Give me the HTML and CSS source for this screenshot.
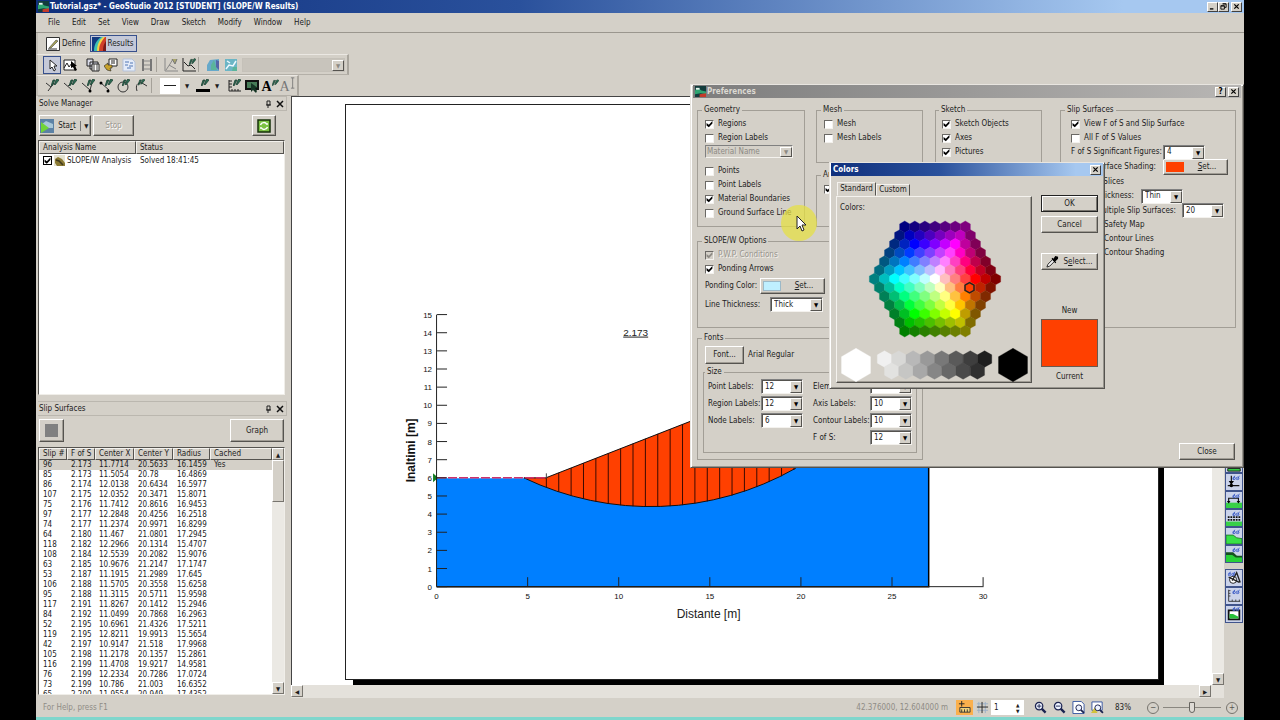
FILE: index.html
```html
<!DOCTYPE html>
<html lang="en">
<head>
<meta charset="utf-8">
<title>Tutorial.gsz* - GeoStudio 2012</title>
<link rel="stylesheet" href="styles.css">
</head>
<body>
<svg class="defs" aria-hidden="true">
  <symbol id="pen" viewBox="0 0 8 8"><path d="M0 7 2 1 4 1 1 7M3 6 5 1 6 0 8 1 4 6" fill="#2b6b52" stroke="#17382c" stroke-width=".7"/></symbol>
  <symbol id="app" viewBox="0 0 12 12"><path d="M0 0h12v12H0z" fill="#123c3c"/><path d="M0 5 3 2l4 3 5 1v3L6 8 0 9z" fill="#2fa572"/><path d="M1 2h4v2H1z" fill="#e8f4f0"/><path d="M5 9l7-1v4H5z" fill="#c33a2b"/></symbol>
  <symbol id="glasses" viewBox="0 0 10 6"><path d="M1 5 3 1M6 5 8 1" stroke="#4060c8" fill="none"/><circle cx="2" cy="4" r="1.5" fill="none" stroke="#4060c8"/><circle cx="6" cy="4" r="1.5" fill="none" stroke="#4060c8"/></symbol>
  <symbol id="lens" viewBox="0 0 14 14"><path d="M8 8l4.500 4.500" stroke="#1c2350" stroke-width="2.500"/><circle cx="5.500" cy="5.500" r="4" fill="#eef3ff" stroke="#1c2350" stroke-width="1.300"/></symbol>
</svg>
<div class="app">
  <header class="titlebar">
    <svg class="title-icon" viewBox="0 0 12 12"><use href="#app"/></svg>
    <h1 class="title-text">Tutorial.gsz* - GeoStudio 2012 [STUDENT] (SLOPE/W Results)</h1>
    <button class="win-btn" aria-label="Minimize"><svg viewBox="0 0 8 8"><path d="M1 6h4v1.500H1z"/></svg></button>
    <button class="win-btn" aria-label="Restore"><svg viewBox="0 0 8 8"><path d="M3 1h4v4H5M1 3h4v4H1z" fill="none" stroke="#000"/><path d="M1 3h4v1H1zM3 .5h4v1H3z"/></svg></button>
    <button class="win-btn win-close" aria-label="Close"><svg viewBox="0 0 8 8"><path d="M1.500 1.500l5 5M6.500 1.500l-5 5" stroke="#000" stroke-width="1.400"/></svg></button>
  </header>
  <nav class="menubar">
    <button>File</button><button>Edit</button><button>Set</button><button>View</button><button>Draw</button><button>Sketch</button><button>Modify</button><button>Window</button><button>Help</button>
  </nav>
  <div class="toolbar">
    <button class="mode"><svg viewBox="0 0 14 14"><path d="M.5.5h13v13H.5z" fill="#fff" stroke="#333"/><path d="M3 11 10 3l2 1-7 7z" fill="#a9a558" stroke="#444" stroke-width=".6"/><path d="M2 12h9" stroke="#333"/></svg>Define</button>
    <button class="mode active"><svg viewBox="0 0 14 14"><path d="M0 0h14v14H0z" fill="#123a80"/><path d="M2 14C2 7 5 3 9 0h5v14z" fill="#3ec0b5"/><path d="M5 14C5 8 7 3 11 0h3v14z" fill="#f0d34a"/><path d="M7 14c0-6 2-9 6-14h1v14z" fill="#d0402a"/><path d="M11 14c0-5 1-7 3-10v10z" fill="#7a1a1a"/></svg>Results</button>
  </div>
  <div class="toolbar toolbar-fit">
    <button class="tool active" aria-label="Select"><svg viewBox="0 0 14 14"><path d="M5 2v9l2-2 2 4 1.500-1L9 8h3z" fill="#fff" stroke="#222"/></svg></button>
    <button class="tool" aria-label="Pick region"><svg viewBox="0 0 14 14"><path d="M1 2h11v10H1z" fill="#fff" stroke="#222"/><path d="M1 10l3-5 2 4 3-4 3 6" fill="none" stroke="#222"/><path d="M8 3v7l2-1 2 4 2-1-2-4h2z"/></svg></button>
    <i class="gap"></i>
    <button class="tool" aria-label="Copy"><svg viewBox="0 0 14 14"><path d="M1 1h6v7H1zM4 4h8v7H4z" fill="#d9dbe8" stroke="#222"/><path d="M6 6h7v7H6z" fill="#fff" stroke="#222"/><path d="M8 6v7M11 6v7" stroke="#444"/></svg></button>
    <button class="tool" aria-label="View results"><svg viewBox="0 0 14 14"><path d="M5 1h8v7H5z" fill="#fff" stroke="#222"/><path d="M7 3h4M7 5h4" stroke="#222"/><path d="M0 8l4-3v2h4v3H6l1 3-4-1z" fill="#c9a32c" stroke="#222" stroke-width=".6"/></svg></button>
    <button class="tool" aria-label="Report"><svg viewBox="0 0 14 14"><path d="M1 1h9l3 3v9H1z" fill="#e4ebf8" stroke="#b5c2da"/><path d="M3 4h4M3 7h3M7 8h4M5 10h4M8 5h3" stroke="#5076b5"/></svg></button>
    <button class="tool" aria-label="Animation"><svg viewBox="0 0 14 14"><path d="M3 1v12M11 1v12" stroke="#777" stroke-width="2"/><path d="M4 3h6M4 7h6M4 11h6" stroke="#888"/></svg></button>
    <i class="sep"></i>
    <button class="tool" aria-label="Graph"><svg viewBox="0 0 14 14"><path d="M1 0v13h13M2 12l4-6 3-5M5 7l7 4" fill="none" stroke="#888"/><path d="M8 1l3 5 2-5" fill="#a9a56c" stroke="#777"/></svg></button>
    <button class="tool" aria-label="Slice graph"><svg viewBox="0 0 14 14"><path d="M1 0v13h13M2 4l4 4 3-1 4 4" fill="none" stroke="#222"/><use href="#pen" x="7" width="7" height="8"/></svg></button>
    <i class="sep"></i>
    <button class="tool" aria-label="Contours"><svg viewBox="0 0 14 14"><path d="M1 7l3-5 9-1v12H1z" fill="#67a9ca"/><path d="M5 12V7l3-5 3 10z" fill="#5bb49b"/><path d="M10 2l3 1v9l-3-3z" fill="#5366a8"/></svg></button>
    <button class="tool" aria-label="Contour labels"><svg viewBox="0 0 14 14"><path d="M1 1h12v12H1z" fill="#6bb5c5"/><path d="M2 11l3-4 4 1 3-5M3 3l3 2" fill="none" stroke="#eef8ff" stroke-width="1.500"/><path d="M9 9h4v4H8z" fill="#5bb49b"/></svg></button>
    <span class="combo combo-wide disabled"><select aria-label="Contour parameter" disabled><option></option></select></span>
  </div>
  <div class="toolbar toolbar-fit toolbar-sketch">
    <button class="tool" aria-label="Line"><svg viewBox="0 0 14 14"><path d="M1 4l5 4M6 8l3-4M6 8l-3 4" stroke="#333" fill="none"/><use href="#pen" x="6" width="8" height="8"/></svg></button>
    <button class="tool" aria-label="Polyline"><svg viewBox="0 0 14 14"><path d="M1 4l8 7M5 7l4-3" stroke="#333" fill="none"/><use href="#pen" x="6" width="8" height="8"/></svg></button>
    <button class="tool" aria-label="Spline"><svg viewBox="0 0 14 14"><path d="M1 4l8 7 2-7" stroke="#333" fill="none"/><circle cx="9" cy="12" r="1.500"/><use href="#pen" x="6" width="8" height="8"/></svg></button>
    <button class="tool" aria-label="Points"><svg viewBox="0 0 14 14"><path d="M2 4l8 7" stroke="#333"/><circle cx="2" cy="4" r="1.500"/><circle cx="9" cy="12" r="1.500"/><use href="#pen" x="6" width="8" height="8"/></svg></button>
    <button class="tool" aria-label="Circle"><svg viewBox="0 0 14 14"><circle cx="6" cy="8" r="5" fill="none" stroke="#333"/><use href="#pen" x="5" width="8" height="8"/></svg></button>
    <button class="tool" aria-label="Arc"><svg viewBox="0 0 14 14"><path d="M2 12C0 6 3 3 7 4l5 3" fill="none" stroke="#333"/><use href="#pen" x="3" width="7" height="7"/></svg></button>
    <i class="sep"></i>
    <button class="line-style" aria-label="Line style"></button><span class="drop">▼</span>
    <button class="tool" aria-label="Pen color"><svg viewBox="0 0 14 14"><path d="M0 10h14v3H0z"/><use href="#pen" x="5" width="8" height="8"/></svg></button><span class="drop drop-slim">▼</span>
    <i class="gap gap-slim"></i>
    <button class="tool" aria-label="Axes"><svg viewBox="0 0 14 14"><path d="M2 1v11h12M2 2h3M2 5h3M2 8h3M5 12v-2M8 12v-2M11 12v-2" fill="none" stroke="#222"/><use href="#pen" x="6" width="8" height="8"/></svg></button>
    <button class="tool" aria-label="Picture"><svg viewBox="0 0 14 14"><path d="M1 2h12v8H1z" fill="#477b57" stroke="#111" stroke-width="2"/><path d="M6 4v9l2-2 3 3 1-2-2-3h3z" fill="#153524"/></svg></button>
    <button class="tool letter" aria-label="Text"><b>A</b><svg viewBox="0 0 8 8"><use href="#pen"/></svg></button>
    <button class="tool letter dim" aria-label="Edit text">A<svg viewBox="0 0 8 14"><path d="M1 1h4M3 1v12M1 13h4" stroke="#777" fill="none"/></svg></button>
  </div>

  <main class="workspace">
    <aside class="docks">
      <section class="dock">
        <header class="dock-head"><h2>Solve Manager</h2><svg viewBox="0 0 8 8"><path d="M3 1h3v4H3zM2 5h5M4 5v3" fill="none" stroke="#222"/></svg><svg viewBox="0 0 8 8"><path d="M1 1l6 6M7 1l-6 6" stroke="#111" stroke-width="1.500"/></svg></header>
        <div class="dock-tools">
          <button class="btn start"><svg viewBox="0 0 14 14"><path d="M0 0h14v14H0z" fill="#5c82a5"/><path d="M2 5l4-3 7 3v4H2z" fill="#a8c7d8"/><path d="M1 3l8 6-8 5z" fill="#70d436"/></svg><span>Sta<u>r</u>t</span><span class="drop start-drop">▼</span></button>
          <button class="btn stop" disabled>Stop</button>
          <button class="btn refresh" aria-label="Refresh"><svg viewBox="0 0 14 14"><path d="M1 1h12v12H1z" fill="#7bc143" stroke="#16300a" stroke-width="1.500"/><path d="M3.500 6c1-3 5-3 6-1h1.500M10.500 8c-1 3-5 3-6 1H3" fill="none" stroke="#fff" stroke-width="1.500"/></svg></button>
        </div>
        <div class="list solve-list">
          <table>
            <colgroup><col class="c-name"><col></colgroup>
            <thead><tr><th>Analysis Name</th><th>Status</th></tr></thead>
            <tbody><tr><td><label class="check tree"><input type="checkbox" checked><svg viewBox="0 0 11 11"><path d="M0 0h11v11H0z" fill="#e4e1cf"/><path d="M1 4l3-2 4 2 3 4v3H3L1 8z" fill="#8c7b35"/><path d="M2 5l3 1 4 4" stroke="#413b1d" stroke-width="1.500" fill="none"/></svg>SLOPE/W Analysis</label></td><td>Solved 18:41:45</td></tr></tbody>
          </table>
        </div>
      </section>
      <section class="dock dock-grow">
        <header class="dock-head"><h2>Slip Surfaces</h2><svg viewBox="0 0 8 8"><path d="M3 1h3v4H3zM2 5h5M4 5v3" fill="none" stroke="#222"/></svg><svg viewBox="0 0 8 8"><path d="M1 1l6 6M7 1l-6 6" stroke="#111" stroke-width="1.500"/></svg></header>
        <div class="dock-tools slip-tools">
          <button class="btn square" aria-label="Stop at slip surface"><i></i></button>
          <button class="btn graph">Graph</button>
        </div>
        <div class="list slip-list">
          <div class="clip">
            <table>
              <colgroup><col class="c-slip"><col class="c-slip"><col class="c-center"><col class="c-center"><col class="c-radius"><col></colgroup>
              <thead><tr><th>Slip #</th><th>F of S</th><th>Center X</th><th>Center Y</th><th>Radius</th><th>Cached</th></tr></thead>
              <tbody id="slips"></tbody>
            </table>
          </div>
          <div class="vscroll"><button class="sb" aria-label="Up">▲</button><i class="thumb"></i><button class="sb sb-end" aria-label="Down">▼</button></div>
        </div>
      </section>
    </aside>

    <section class="view">
      <div class="view-row">
        <div class="canvas">
          <div class="sheet">
            <svg id="plot" class="plot" viewBox="345 104 813 575" role="img" aria-label="Slope stability section">
              <path d="M435 478H545L830 366 928 366V586H435z" fill="#007fff"/>
              <path d="M523 477.500H545L830 366V440L795 468A294 294 0 0 1 523 477.500z" fill="#ff4000" stroke="#111"/>
              <g id="slices" stroke="#3a0a00" stroke-width="1"></g>
              <path d="M928.500 366V586.500H435.500" fill="none" stroke="#000" stroke-width="1.500"/>
              <path d="M436 477.500H545" stroke="#d0306a" stroke-width="1.500" stroke-dasharray="9 2"/>
              <path d="M545.500 478v-5" stroke="#444"/>
              <path d="M432 473l5 4.500-5 4.500z" fill="#117a1c"/>
              <g id="axes" stroke="#222" stroke-width="1"><path d="M435.500 314V586.500H983.500" fill="none"/></g>
              <g id="ticks" class="tick-text"></g>
              <text class="fs" x="635" y="335" text-anchor="middle">2.173</text>
              <text class="axis-x" x="708" y="618" text-anchor="middle">Distante [m]</text>
              <text class="axis-y" text-anchor="middle" transform="translate(414 450) rotate(-90)">Inaltimi [m]</text>
            </svg>
          </div>
        </div>
        <div class="vscroll view-v"><button class="sb sb-end" aria-label="Scroll down">▼</button></div>
      </div>
      <div class="hscroll"><button class="sb" aria-label="Scroll left">◀</button><button class="sb sb-right" aria-label="Scroll right">▶</button></div>
    </section>

    <div class="side-tools">
      <button aria-label="Regions"><svg viewBox="0 0 18 18"><path d="M2 14h14v3H2z" fill="#38d048" stroke="#111"/></svg></button>
      <button aria-label="Point loads"><svg viewBox="0 0 18 18"><path d="M6 2v9M2 13h13" stroke="#111" stroke-width="1.300"/><path d="M3 8h6l-3 4z"/><circle cx="6" cy="13" r="2"/><use href="#glasses" x="7" y="1" width="10" height="6"/></svg></button>
      <button aria-label="Surcharge"><svg viewBox="0 0 18 18"><path d="M0 12h18v6H0z" fill="#38d048"/><path d="M3 12V7h11v5" fill="none" stroke="#111" stroke-width="1.300"/><path d="M1 10h4l-2 3zM12 10h4l-2 3z"/><use href="#glasses" x="7" y="1" width="10" height="6"/></svg></button>
      <button aria-label="Reinforcement"><svg viewBox="0 0 18 18"><path d="M0 13h18v5H0z" fill="#38d048"/><path d="M2 8h14M2 11h14" stroke="#111" stroke-width="2" stroke-dasharray="2 1"/><use href="#glasses" x="7" y="1" width="10" height="6"/></svg></button>
      <button aria-label="Pore water"><svg viewBox="0 0 18 18"><path d="M0 8h8l4 3 6 1v6H0z" fill="#38e048" stroke="#227a2a"/><use href="#glasses" x="7" y="1" width="10" height="6"/></svg></button>
      <button aria-label="Ponding"><svg viewBox="0 0 18 18"><path d="M0 8h8l4 3 6 1v6H0z" fill="#28d038"/><path d="M0 7h8l4 4h6v2h-7L7 10H0z" fill="#175020"/><use href="#glasses" x="7" y="1" width="10" height="6"/></svg></button>
      <i></i>
      <button aria-label="Sketch view"><svg viewBox="0 0 18 18"><circle cx="8" cy="11" r="4" fill="#fff" stroke="#111"/><path d="M7 12l5-9 4 11M3 8l12 6" fill="none" stroke="#222" stroke-width="1.500"/><use href="#glasses" x="2" y="1" width="10" height="6"/></svg></button>
      <button aria-label="Axes view"><svg viewBox="0 0 18 18"><path d="M3 2v13h13M3 3h2M3 6h2M3 9h2M7 15v-2M11 15v-2M15 15v-2" fill="none" stroke="#333"/><use href="#glasses" x="7" y="1" width="10" height="6"/></svg></button>
      <button aria-label="Picture view"><svg viewBox="0 0 18 18"><path d="M3 5h12v10H3z" fill="#fff" stroke="#111" stroke-width="2"/><path d="M4 9h4l6 3v2H4z" fill="#28c038"/><use href="#glasses" x="7" y="0" width="10" height="6"/></svg></button>
    </div>
  </main>

  <footer class="status">
    <span class="help">For Help, press F1</span>
    <span class="coords">42.376000, 12.604000 m</span>
    <button class="st-btn hot" aria-label="Snap"><svg viewBox="0 0 14 14"><path d="M1 3h6M4 0v6" stroke="#222"/><path d="M2 7h11v5H2z" fill="#f3d27a" stroke="#333"/><path d="M4 12V9M7 12V9M10 12V9" stroke="#333"/></svg></button>
    <button class="st-btn grid-btn" aria-label="Grid"><svg viewBox="0 0 14 14"><path d="M1 3h12M1 10h12M3 1v12M10 1v12" stroke="#9bb0c8"/><path d="M1 6.500h12M6.500 1v12" stroke="#222"/></svg></button>
    <span class="spin"><input aria-label="Grid spacing" value="1"><b>▲<br>▼</b></span>
    <button class="st-btn" aria-label="Zoom in"><svg viewBox="0 0 14 14"><use href="#lens"/><path d="M3 5.500h5M5.500 3v5" stroke="#1c2350"/></svg></button>
    <button class="st-btn" aria-label="Zoom out"><svg viewBox="0 0 14 14"><use href="#lens"/><path d="M3 5.500h5" stroke="#1c2350"/></svg></button>
    <button class="st-btn" aria-label="Zoom page"><svg viewBox="0 0 14 14"><path d="M1 .5h9l3 3v10H1z" fill="#fff" stroke="#3353a0"/><use href="#lens" x="3" y="3" width="11" height="11"/></svg></button>
    <button class="st-btn" aria-label="Zoom objects"><svg viewBox="0 0 14 14"><path d="M1 1h11v9H1z" fill="#fff" stroke="#3353a0"/><path d="M0 13l4-6 3 6z" fill="#d2c23a"/><use href="#lens" x="3" y="3" width="11" height="11"/></svg></button>
    <span class="pct">83%</span>
    <button class="round" aria-label="Decrease zoom">−</button>
    <input class="slider" type="range" aria-label="Zoom" value="50">
    <button class="round" aria-label="Increase zoom">+</button>
  </footer>

  <section class="window prefs" role="dialog" aria-label="Preferences">
    <header class="titlebar inactive">
      <svg class="title-icon" viewBox="0 0 12 12"><use href="#app"/></svg>
      <h2 class="title-text">Preferences</h2>
      <button class="win-btn" aria-label="Help">?</button>
      <button class="win-btn win-close" aria-label="Close"><svg viewBox="0 0 8 8"><path d="M1.500 1.500l5 5M6.500 1.500l-5 5" stroke="#000" stroke-width="1.400"/></svg></button>
    </header>
    <div class="prefs-body">
      <div class="prefs-left">
        <div class="pair">
          <fieldset class="geometry"><legend>Geometry</legend>
            <label class="check"><input type="checkbox" checked>Regions</label>
            <label class="check"><input type="checkbox">Region Labels</label>
            <span class="combo material disabled"><select aria-label="Region label" disabled><option>Material Name</option></select></span>
            <label class="check"><input type="checkbox">Points</label>
            <label class="check"><input type="checkbox">Point Labels</label>
            <label class="check"><input type="checkbox" checked>Material Boundaries</label>
            <label class="check"><input type="checkbox">Ground Surface Line</label>
          </fieldset>
          <div class="stack">
            <fieldset class="mesh"><legend>Mesh</legend>
              <label class="check"><input type="checkbox">Mesh</label>
              <label class="check"><input type="checkbox">Mesh Labels</label>
            </fieldset>
            <fieldset class="grow"><legend>Arrows</legend>
              <label class="check"><input type="checkbox" aria-label="Arrows" checked></label>
            </fieldset>
          </div>
        </div>
        <fieldset class="options"><legend>SLOPE/W Options</legend>
          <label class="check disabled"><input type="checkbox" checked disabled>P.W.P. Conditions</label>
          <label class="check"><input type="checkbox" checked>Ponding Arrows</label>
          <div class="field"><span class="w-color">Ponding Color:</span><button class="btn set"><i class="chip sky"></i><span><u>S</u>et...</span></button></div>
          <div class="field"><label class="w-thick" for="thick">Line Thickness:</label><span class="combo c-thick"><select id="thick"><option>Thick</option></select></span></div>
        </fieldset>
        <fieldset class="fonts"><legend>Fonts</legend>
          <div class="font-row"><button class="btn font-btn">Font...</button><span>Arial Regular</span></div>
          <fieldset class="sizes"><legend>Size</legend>
            <label for="s1">Point Labels:</label><span class="combo"><select id="s1"><option>12</option></select></span>
            <label for="s2" class="second">Element Labels:</label><span class="combo"><select id="s2"><option>6</option></select></span>
            <label for="s3">Region Labels:</label><span class="combo"><select id="s3"><option>12</option></select></span>
            <label for="s4" class="second">Axis Labels:</label><span class="combo"><select id="s4"><option>10</option></select></span>
            <label for="s5">Node Labels:</label><span class="combo"><select id="s5"><option>6</option></select></span>
            <label for="s6" class="second">Contour Labels:</label><span class="combo"><select id="s6"><option>10</option></select></span>
            <label for="s7" class="second col3">F of S:</label><span class="combo"><select id="s7"><option>12</option></select></span>
          </fieldset>
        </fieldset>
      </div>
      <fieldset class="sketch"><legend>Sketch</legend>
        <label class="check"><input type="checkbox" checked>Sketch Objects</label>
        <label class="check"><input type="checkbox" checked>Axes</label>
        <label class="check"><input type="checkbox" checked>Pictures</label>
      </fieldset>
      <div class="prefs-right">
        <fieldset class="slip"><legend>Slip Surfaces</legend>
          <label class="check"><input type="checkbox" checked>View F of S and Slip Surface</label>
          <label class="check"><input type="checkbox">All F of S Values</label>
          <div class="field"><label class="e-wide" for="figs">F of S Significant Figures:</label><span class="combo"><select id="figs"><option>4</option></select></span></div>
          <div class="field field-tall"><span class="e-wide e-right">Slip Surface Shading:</span><button class="btn set"><i class="chip flame"></i><span><u>S</u>et...</span></button></div>
          <label class="check"><input type="checkbox" checked>View Slices</label>
          <div class="field"><label class="e-thin" for="thin">Line Thickness:</label><span class="combo"><select id="thin"><option>Thin</option></select></span></div>
          <div class="field field-mid"><label class="e-max" for="multi"># Multiple Slip Surfaces:</label><span class="combo"><select id="multi"><option>20</option></select></span></div>
          <label class="check sub"><input type="checkbox">Safety Map</label>
          <label class="check sub"><input type="checkbox">Contour Lines</label>
          <label class="check sub"><input type="checkbox">Contour Shading</label>
        </fieldset>
        <button class="btn close-btn">Close</button>
      </div>
    </div>
  </section>

  <svg class="pointer" viewBox="0 0 40 40"><circle cx="20" cy="20" r="18" fill="#e6e040" opacity=".72"/><path d="M18 13v13l3-3 2 5 2-1-2-5h4z" fill="#fff" stroke="#222"/></svg>

  <section class="window colors" role="dialog" aria-label="Colors">
    <header class="titlebar">
      <h2 class="title-text">Colors</h2>
      <button class="win-btn win-close" aria-label="Close"><svg viewBox="0 0 8 8"><path d="M1.500 1.500l5 5M6.500 1.500l-5 5" stroke="#000" stroke-width="1.400"/></svg></button>
    </header>
    <div class="colors-body">
      <div class="tabs">
        <div class="tab-row"><button class="tab on">Standard</button><button class="tab">Custom</button></div>
        <div class="tab-page">
          <span>Colors:</span>
          <svg id="comb" class="comb" viewBox="839 214 188 168"></svg>
        </div>
      </div>
      <div class="actions">
        <button class="btn ok">OK</button>
        <button class="btn">Cancel</button>
        <button class="btn select"><svg viewBox="0 0 14 14"><path d="M1 13l1-3 5-5 2 2-5 5z" fill="#eee" stroke="#222"/><path d="M6 4l1-1 1 1 2-3 3 1v2l-3 3 1 1-1 1z"/></svg><span>S<u>e</u>lect...</span></button>
        <span class="new">New</span>
        <i class="swatch"></i>
        <span>Current</span>
      </div>
    </div>
  </section>
</div>
<script src="app.js"></script>
</body>
</html>
```

FILE: styles.css
```css
* { box-sizing: border-box; }
body {
  margin: 0;
  background: #000;
  color: #1c1c1c;
  font: 8px/10px "DejaVu Sans Condensed", "DejaVu Sans", sans-serif;
}
button, select, input { font: inherit; color: inherit; margin: 0; padding: 0; border: 0; border-radius: 0; }
button { background: none; white-space: nowrap; }
h1, h2 { margin: 0; font-size: inherit; }
label, span { white-space: nowrap; }
.defs { position: absolute; width: 0; height: 0; }

.app {
  position: relative;
  display: flex;
  flex-direction: column;
  height: 100vh;
  margin: 0 36px;
  background: #d4d0c8;
  border-bottom: 3px solid #7fd6cc;
  overflow: hidden;
}

/* title bars */
.titlebar {
  flex: none;
  display: flex;
  align-items: center;
  height: 13px;
  padding: 0 2px;
  background: linear-gradient(90deg, #0f2f7c, #2a519c 40%, #a6c8f0 90%);
  color: #fff;
}
.titlebar.inactive { background: linear-gradient(90deg, #7d7d7d, #b8b6b4); color: #dcd9d2; }
.title-icon { width: 11px; height: 11px; margin-right: 1px; }
.title-text { flex: 1; font-weight: bold; line-height: 12px; }
.win-btn {
  display: flex;
  align-items: center;
  justify-content: center;
  width: 11px;
  height: 10px;
  background: #d4d0c8;
  border: 1px solid;
  border-color: #fff #404040 #404040 #fff;
  color: #000;
  font-weight: bold;
}
.win-btn svg { width: 7px; height: 7px; }
.win-close { margin-left: 2px; }

/* menus and toolbars */
.menubar {
  flex: none;
  display: flex;
  gap: 12px;
  align-items: center;
  height: 20px;
  padding: 1px 12px 0;
  border-bottom: 1px solid #9a968e;
}
.toolbar {
  flex: none;
  display: flex;
  align-items: center;
  height: 21px;
  padding-left: 7px;
  border-left: 2px solid #c2beb6;
}
.toolbar-fit {
  align-self: flex-start;
  padding-left: 5px;
  padding-right: 2px;
  border-right: 2px solid #aaa69e;
  border-bottom: 1px solid #b4b0a8;
  border-top: 1px solid #ebe8e3;
}
.toolbar-sketch { padding-right: 0; }
.mode { display: flex; align-items: center; gap: 2px; height: 17px; padding: 0 1px; }
.mode svg { width: 14px; height: 14px; }
.mode.active { margin-left: 3px; padding: 0 3px 0 1px; background: #c5c9d8; border: 1px solid #37508c; }
.tool { display: flex; align-items: center; justify-content: center; width: 18px; height: 18px; }
.tool svg { width: 14px; height: 14px; }
.tool.active { background: #c5c9d8; border: 1px solid #37508c; }
.letter { align-items: flex-end; font: 14px/16px "Liberation Serif", serif; color: #000; }
.letter svg { width: 7px; height: 12px; align-self: flex-start; }
.dim { color: #777; }
.gap { width: 5px; }
.gap-slim { width: 3px; }
.sep { width: 6px; height: 15px; border-left: 1px solid #a5a199; }
.line-style { width: 20px; height: 16px; background: #fff; margin-left: 3px; }
.line-style::before { content: ""; display: block; height: 1px; margin: 0 4px; background: #222; }
.drop { width: 14px; text-align: center; font-size: 6px; }
.drop-slim { width: 10px; }

/* drop-down lists */
.combo { position: relative; display: block; width: 42px; height: 15px; }
.combo select {
  display: block;
  width: 100%;
  height: 100%;
  padding-left: 3px;
  appearance: none;
  background: #fff;
  border: 1px solid;
  border-color: #808080 #f4f2ee #f4f2ee #808080;
  box-shadow: inset 1px 1px #55534f;
  opacity: 1;
}
.combo::after {
  content: "▼";
  position: absolute;
  top: 2px;
  right: 1px;
  bottom: 1px;
  width: 10px;
  background: #d4d0c8;
  border: 1px solid;
  border-color: #fff #55534f #55534f #fff;
  font-size: 6px;
  line-height: 10px;
  text-align: center;
  color: #000;
  pointer-events: none;
}
.combo.disabled select { background: #d4d0c8; color: #8d8a84; box-shadow: none; }
.combo.disabled::after { color: #8d8a84; }
.combo-wide { width: 103px; height: 14px; margin-left: 2px; }
.combo.combo-wide select { border-color: #c5c1b9; background: #c8c4bc; }

/* push buttons and check boxes */
.btn {
  display: flex;
  align-items: center;
  justify-content: center;
  background: #d4d0c8;
  border: 1px solid;
  border-color: #fff #55534f #55534f #fff;
  box-shadow: inset -1px -1px #a09c94;
}
.check { display: flex; align-items: center; height: 14px; gap: 4px; }
.check input {
  appearance: none;
  width: 9px;
  height: 9px;
  background: #fff;
  border: 1px solid;
  border-color: #6a6864 #f4f2ee #f4f2ee #6a6864;
}
.check input:checked::before {
  content: "";
  display: block;
  width: 7px;
  height: 7px;
  background: #000;
  clip-path: polygon(8% 35%, 40% 62%, 92% 8%, 92% 42%, 40% 98%, 8% 70%);
}
.check.disabled { color: #98958e; text-shadow: 1px 1px #f4f2ee; }
.check input:disabled { background: #d4d0c8; }
.check input:disabled::before { background: #8d8a84; }

/* work area */
.workspace { flex: 1; display: flex; min-height: 0; }
.docks { flex: none; display: flex; flex-direction: column; width: 251px; padding-left: 2px; }
.dock { display: flex; flex-direction: column; }
.dock-grow { flex: 1; min-height: 0; margin-top: 6px; }
.dock-head {
  display: flex;
  align-items: center;
  gap: 4px;
  height: 15px;
  padding: 0 2px 0 1px;
  border: 1px solid #bbb7af;
  border-left: 0;
}
.dock-head h2 { flex: 1; font-weight: normal; }
.dock-head svg { width: 8px; height: 8px; }
.dock-tools { display: flex; gap: 2px; height: 29px; padding: 4px 8px 4px 1px; }
.start { width: 52px; gap: 4px; }
.start svg { width: 14px; height: 14px; }
.start-drop { width: 10px; padding-left: 2px; border-left: 1px solid #777; }
.stop { width: 41px; color: #9d9a93; text-shadow: 1px 1px #fff; }
.refresh { width: 24px; margin: 0 3px 0 auto; }
.refresh svg { width: 14px; height: 14px; }
.slip-tools { height: 31px; padding: 3px 3px 5px 1px; }
.square { width: 25px; }
.square i { width: 13px; height: 13px; background: #808080; }
.graph { width: 54px; margin-left: auto; }
.list { width: 247px; background: #fff; border: 1px solid; border-color: #55534f #f0eee9 #f0eee9 #55534f; }
.solve-list { height: 255px; }
.slip-list { flex: 1; display: flex; min-height: 0; margin-bottom: 3px; }
.clip { flex: 1; min-height: 0; overflow: hidden; }
table { width: 100%; table-layout: fixed; border-collapse: separate; border-spacing: 0; }
th, td { padding: 0 0 0 4px; text-align: left; font-weight: normal; white-space: nowrap; }
th {
  height: 12px;
  padding-left: 3px;
  background: #d4d0c8;
  border: 1px solid;
  border-color: #f4f2ee #55534f #55534f #f4f2ee;
}
.solve-list th { height: 13px; }
.c-name { width: 97px; }
.c-slip { width: 28px; }
.c-center { width: 39px; }
.c-radius { width: 37px; }
.picked td { background: #d4d0c8; }
.tree { gap: 2px; height: 13px; }
.tree svg { width: 11px; height: 11px; }
.tree input { border-color: #000; }

/* scroll bars */
.vscroll { flex: none; display: flex; flex-direction: column; width: 12px; background: #ebe9e4; }
.hscroll { flex: none; display: flex; height: 13px; padding-right: 13px; background: #e4e1db; }
.sb {
  width: 12px;
  height: 12px;
  background: #d4d0c8;
  border: 1px solid;
  border-color: #fff #77746e #77746e #fff;
  font-size: 6px;
  line-height: 9px;
  text-align: center;
}
.sb-end { margin-top: auto; }
.sb-right { margin-left: auto; }
.thumb { height: 42px; background: #d4d0c8; border: 1px solid; border-color: #fff #77746e #77746e #fff; }

/* drawing sheet */
.view { flex: 1; display: flex; flex-direction: column; min-width: 0; margin-left: 4px; }
.view-row { flex: 1; display: flex; min-height: 0; }
.canvas { flex: 1; padding: 7px 53px 5px; background: #fff; border: solid #444; border-width: 1px 0 0 1px; overflow: hidden; }
.sheet { height: 100%; background: #fff; border: 1px solid #222; box-shadow: 5px 5px #000; position: relative; }
.sheet::before { content: ""; position: absolute; left: -1px; bottom: -6px; width: 8px; height: 5px; background: #fff; }
.plot { display: block; width: 100%; height: 100%; }
.tick-text { font: 8px "Liberation Sans", sans-serif; fill: #111; stroke: none; }
.fs { font: 10px "Liberation Sans", sans-serif; text-decoration: underline; fill: #222; }
.axis-x { font: 12px "Liberation Sans", sans-serif; fill: #222; }
.axis-y { font: bold 12px "Liberation Sans", sans-serif; fill: #111; }
.side-tools { flex: none; display: flex; flex-direction: column; width: 20px; padding: 359px 1px 0; }
.side-tools button { height: 18px; background: #cbd3ea; border: 1px solid #40548c; }
.side-tools svg { display: block; width: 16px; height: 16px; }
.side-tools i { height: 6px; }

/* status bar */
.status { flex: none; display: flex; align-items: center; height: 19px; padding: 0 6px 0 7px; color: #8f8c86; }
.help { flex: 1; }
.coords { margin-right: 8px; }
.st-btn { width: 19px; height: 15px; }
.st-btn svg { display: block; width: 13px; height: 13px; margin: 0 auto; }
.hot { width: 17px; background: #fbb04c; }
.grid-btn { width: 18px; }
.spin { display: flex; align-items: center; width: 33px; height: 15px; margin-right: 7px; background: #fff; color: #222; }
.spin input { width: 25px; padding-left: 3px; background: none; }
.spin b { font-size: 5px; line-height: 6px; }
.pct { width: 40px; padding-left: 8px; color: #222; }
.round { width: 12px; height: 12px; border: 1px solid #77746e; border-radius: 50%; line-height: 9px; color: #55534f; }
.slider { appearance: none; width: 58px; height: 12px; margin: 0 5px 0 4px; background: linear-gradient(#8a8780, #8a8780) center / 100% 1px no-repeat; }
.slider::-webkit-slider-thumb { appearance: none; width: 6px; height: 11px; background: #dedbd5; border: 1px solid #66645f; border-radius: 0 0 3px 3px; }

/* floating windows */
.window {
  position: absolute;
  background: #d4d0c8;
  border: 1px solid;
  border-color: #e8e5e0 #55534f #55534f #e8e5e0;
  box-shadow: inset 1px 1px #fff, inset -1px -1px #98958e;
}
fieldset {
  min-width: 0;
  margin: 0;
  padding: 2px 6px 5px 7px;
  border: 1px solid #a29e96;
}
legend { height: 10px; margin-left: -3px; padding: 0 2px; }
.prefs { top: 84px; right: 0; width: 554px; height: 384px; padding: 0 2px; }
.prefs-body { display: flex; padding: 7px 4px 0; }
.prefs-left { width: 226px; display: flex; flex-direction: column; }
.pair { display: flex; gap: 11px; height: 122px; }
.geometry { width: 108px; }
.stack { flex: 1; display: flex; flex-direction: column; }
.mesh { height: 58px; margin-bottom: 7px; }
.grow { flex: 1; }
.material { width: 88px; height: 13px; margin-bottom: 6px; }
.material select { padding-left: 1px; }
.material::after { line-height: 8px; }
.options { height: 92px; margin-top: 9px; }
.field { display: flex; align-items: center; height: 14px; }
.options .field { height: 19px; }
.set { width: 65px; height: 16px; gap: 14px; padding-right: 9px; }
.w-color { width: 55px; }
.w-thick { width: 65px; }
.c-thick { width: 53px; }
.chip { width: 18px; height: 10px; }
.sky { background: #bfefff; border: 1px solid #9cb9c8; }
.flame { background: #ff4000; }
.fonts { height: 127px; margin-top: 5px; padding-top: 3px; }
.font-row { display: flex; align-items: center; gap: 4px; height: 18px; }
.font-btn { width: 39px; height: 18px; }
.sizes {
  display: grid;
  grid-template-columns: 53px 42px 67px 42px;
  grid-auto-rows: 17px;
  align-items: center;
  margin: 3px -1px 0 -2px;
  height: 86px;
  padding: 1px 0 5px 4px;
}
.sizes .second { padding-left: 10px; }
.sizes .col3 { grid-column: 3; }
.sketch { width: 107px; height: 122px; margin-left: 12px; padding-left: 6px; }
.prefs-right { margin-left: 18px; width: 176px; }
.slip { height: 223px; padding-left: 10px; }
.slip > legend { margin-left: -6px; }
.e-wide { width: 92px; }
.e-right { text-align: right; padding-right: 7px; }
.e-thin { width: 70px; text-align: right; padding-right: 7px; }
.e-max { width: 111px; text-align: right; padding-right: 6px; }
.field-tall { height: 16px; }
.field-mid { height: 15px; }
.sub { padding-left: 20px; }
.close-btn { width: 56px; height: 17px; margin: 115px 0 0 119px; }
.pointer { position: absolute; left: 743px; top: 203px; width: 40px; height: 40px; }

/* colour picker */
.colors { top: 162px; right: 139px; width: 276px; height: 227px; padding: 0 1px 1px; }
.colors-body { display: flex; gap: 9px; padding: 6px 5px 4px; }
.tabs { width: 196px; }
.tab-row { display: flex; align-items: flex-end; height: 14px; padding-left: 1px; }
.tab { width: 34px; height: 12px; border: 1px solid; border-color: #f4f2ee #55534f transparent #f4f2ee; }
.tab.on { width: 39px; height: 14px; }
.tab-page { height: 187px; padding: 6px 3px 0; border: 1px solid; border-color: #f4f2ee #55534f #55534f #f4f2ee; box-shadow: inset -1px -1px #a09c94; }
.comb { display: block; width: 188px; height: 168px; overflow: visible; }
.actions { flex: 1; display: flex; flex-direction: column; align-items: stretch; padding-top: 13px; text-align: center; }
.actions .btn { flex: none; height: 17px; margin-bottom: 4px; }
.actions .ok { border-color: #222; box-shadow: inset 1px 1px #fff, inset -1px -1px #77746e; }
.actions .select { margin: 16px 0 36px; gap: 4px; }
.select svg { width: 13px; height: 13px; }
.swatch { height: 48px; margin: 3px 0 5px; background: #ff4000; border: 1px solid #6a5a50; }
```

FILE: app.js
```javascript
const NS = "http://www.w3.org/2000/svg";
function add(parent, tag, attrs, text) {
  const el = document.createElementNS(NS, tag);
  for (const key in attrs) el.setAttribute(key, attrs[key]);
  if (text !== undefined) el.textContent = text;
  parent.appendChild(el);
  return el;
}

const slips = `96 2.173 11.7714 20.5633 16.1459 Yes
85 2.173 11.5054 20.78 16.4869
86 2.174 12.0138 20.6434 16.5977
107 2.175 12.0352 20.3471 15.8071
75 2.176 11.7412 20.8616 16.9453
97 2.177 12.2848 20.4256 16.2518
74 2.177 11.2374 20.9971 16.8299
64 2.180 11.467 21.0801 17.2945
118 2.182 12.2966 20.1314 15.4707
108 2.184 12.5539 20.2082 15.9076
63 2.185 10.9676 21.2147 17.1747
53 2.187 11.1915 21.2989 17.645
106 2.188 11.5705 20.3558 15.6258
95 2.188 11.3115 20.5711 15.9598
117 2.191 11.8267 20.1412 15.2946
84 2.192 11.0499 20.7868 16.2963
52 2.195 10.6961 21.4326 17.5211
119 2.195 12.8211 19.9913 15.5654
42 2.197 10.9147 21.518 17.9968
105 2.198 11.2178 20.1357 15.2861
116 2.199 11.4708 19.9217 14.9581
76 2.199 12.2334 20.7286 17.0724
73 2.199 10.786 21.003 16.6352
65 2.200 11.9554 20.949 17.4352`;
const body = document.getElementById("slips");
slips.split("\n").forEach((line, i) => {
  const row = body.insertRow();
  if (i === 0) row.className = "picked";
  const cells = line.split(" ");
  for (let c = 0; c < 6; c++) row.insertCell().textContent = cells[c] || "";
});

// Section plot: axis ticks and slice boundaries
const axes = document.getElementById("axes");
const ticks = document.getElementById("ticks");
for (let v = 0; v <= 15; v++) {
  const y = 586.5 - v * 18.17;
  add(axes, "path", { d: `M436 ${y}h10` });
  add(ticks, "text", { x: 431, y: y + 3, "text-anchor": "end" }, v);
}
for (let v = 0; v <= 30; v += 5) {
  const x = 435.5 + v * 18.25;
  add(axes, "path", { d: `M${x} 586v-9` });
  add(ticks, "text", { x: x, y: 599, "text-anchor": "middle" }, v);
}
const slices = document.getElementById("slices");
for (let x = 545.5; x < 795; x += 12.4) {
  const top = 477.5 - (x - 545) * 0.393;
  const bottom = 212.5 + Math.sqrt(294 * 294 - (x - 650.5) ** 2);
  add(slices, "path", { d: `M${x} ${top}V${bottom}` });
}

// Honeycomb: hue runs round each ring, lightness falls towards the rim
const comb = document.getElementById("comb");
function hex(cx, cy, w, fill, stroke) {
  const r = w / Math.sqrt(3);
  const pts = [];
  for (let i = 0; i < 6; i++) {
    const a = Math.PI / 6 + (i * Math.PI) / 3;
    pts.push((cx + r * Math.cos(a)).toFixed(2) + "," + (cy + r * Math.sin(a)).toFixed(2));
  }
  return add(comb, "polygon", { points: pts.join(" "), fill, stroke: stroke || fill, "stroke-width": stroke ? 1.5 : 0.3 });
}
for (let row = -6; row <= 6; row++) {
  const count = 13 - Math.abs(row);
  for (let i = 0; i < count; i++) {
    const dx = i - (count - 1) / 2;
    const ring = Math.max(Math.abs(row), Math.abs(dx) + Math.abs(row) / 2);
    // the angle grows clockwise: red right, yellow lower right, green lower left
    const angle = (Math.atan2(row * 0.866, dx) * 180) / Math.PI;
    const hue = (angle + 360) % 360;
    hex(934 + dx * 10.1, 280 + row * 8.7, 10.1, `hsl(${hue},100%,${100 - ring * 12.5}%)`);
  }
}
hex(968.5, 288.7, 9, "#ff4000", "#222");
hex(855, 366, 29, "#fff");
hex(1012, 366, 29, "#000");
["#f0f0f0", "#d8d8d6", "#b8b8b8", "#999", "#787878", "#5a5a5a", "#3e3e3e", "#1e1e1e"].forEach((c, i) => hex(883.5 + i * 14.3, 360, 14.3, c));
["#e2e2e0", "#c6c6c4", "#a8a8a8", "#868686", "#686868", "#4a4a4a", "#303030"].forEach((c, i) => hex(890.6 + i * 14.3, 372, 14.3, c));
```
